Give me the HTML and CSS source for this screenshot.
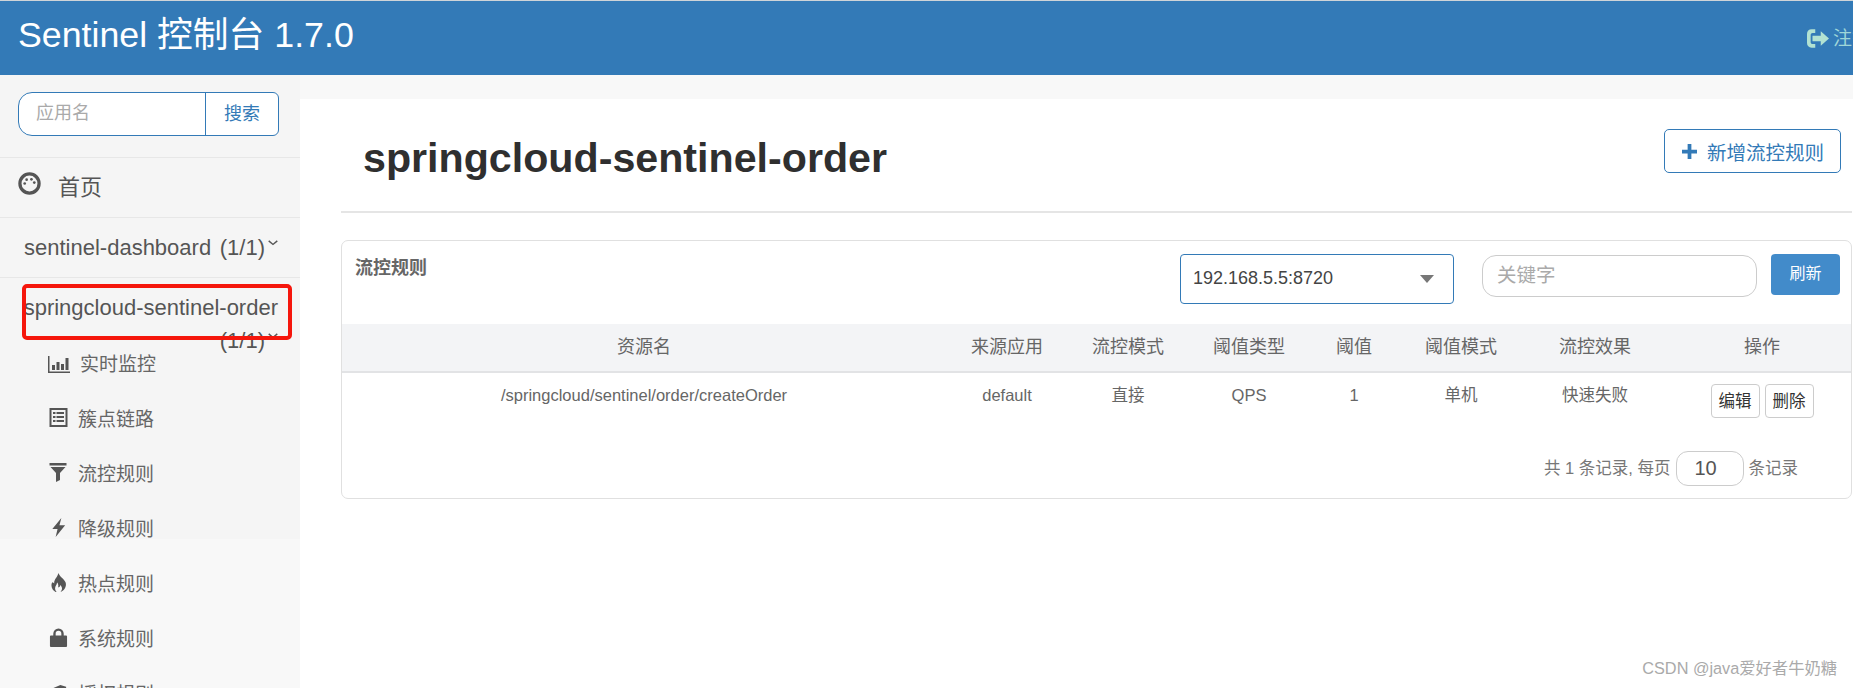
FILE: index.html
```html
<!DOCTYPE html>
<html lang="zh-CN">
<head>
<meta charset="utf-8">
<title>Sentinel 控制台</title>
<link rel="stylesheet" href="styles.css">
</head>
<body>
<header class="topbar">
  <div class="brand">Sentinel 控制台 1.7.0</div>
  <div class="logout">
    <svg class="logout-icon" viewBox="0 0 24 20"><path d="M9 0H5C2 0 0 2 0 5v10c0 3 2 5 5 5h4v-4H6c-1 0-2-1-2-2V6c0-1 1-2 2-2h3z"/><path d="M6 7h9V2l9 8-9 8v-5H6z"/></svg>
    <span class="logout-text">注销</span>
  </div>
</header>
<div class="layout">
  <aside class="sidebar">
    <div class="sidebar-top">
      <div class="search-wrap">
        <div class="search">
          <span class="search-input">应用名</span>
          <span class="search-btn">搜索</span>
        </div>
      </div>
      <div class="nav-row nav-home">
        <svg class="home-icon" viewBox="0 0 24 24"><circle cx="12" cy="12" r="10" fill="none" stroke="currentColor" stroke-width="3.4"/><circle cx="7" cy="12" r="1.4" fill="currentColor"/><circle cx="9" cy="8" r="1.4" fill="currentColor"/><circle cx="14" cy="7.6" r="1.4" fill="currentColor"/><circle cx="17" cy="11" r="1.4" fill="currentColor"/></svg>
        <span>首页</span>
      </div>
      <div class="nav-row nav-app">
        <span class="app-name">sentinel-dashboard</span>
        <span class="app-count">(1/1)</span>
        <svg class="chev" viewBox="0 0 14 8"><path d="M1 1l6 5 6-5" fill="none" stroke="currentColor" stroke-width="2"/></svg>
      </div>
      <div class="nav-row nav-app nav-open">
        <span class="app-name">springcloud-sentinel-order</span>
        <span class="app-count">(1/1)</span>
        <svg class="chev" viewBox="0 0 14 8"><path d="M1 1l6 5 6-5" fill="none" stroke="currentColor" stroke-width="2"/></svg>
        <div class="annotation"></div>
      </div>
      <ul class="sub">
        <li class="sub-item sub-first"><svg class="sub-icon" viewBox="0 0 22 17" preserveAspectRatio="none"><path d="M0 0h1.500v15.500H22V17H0z"/><path d="M4 9h3v5H4zM8.500 6h3v8h-3zM13 8h3v6h-3zM17.500 2h3v12h-3z"/></svg><span>实时监控</span></li>
        <li class="sub-item"><svg class="sub-icon" viewBox="0 0 18 19"><path fill-rule="evenodd" d="M0 0h18v19H0zM2 2v15h14V2z"/><path d="M3.500 4H6v2H3.500zM7 4h7.500v2H7zM3.500 8H6v2H3.500zM7 8h7.500v2H7zM3.500 12H6v2H3.500zM7 12h7.500v2H7z"/></svg><span>簇点链路</span></li>
        <li class="sub-item"><svg class="sub-icon" viewBox="0 0 18 19"><path d="M0 0h17v2.500H0zM1 4h15l-5.500 6v7L6.500 19v-9z"/></svg><span>流控规则</span></li>
        <li class="sub-item"><svg class="sub-icon" viewBox="0 0 18 20"><path d="M12 0L2.500 11.500h5.500L6 20l10-12.500h-6z"/></svg><span>降级规则</span></li>
        <li class="sub-item"><svg class="sub-icon" viewBox="0 0 18 20"><path d="M9 0c1 4 6 6 7.500 10 1.200 4-1 8.500-5.500 10 2-2 2.500-4.500 0-7.500-.5 2-1.500 2.500-2.500 2.500.8-2 0-4-1-5-.3 3-2.500 4-2 7 .2 1.500 1 2.500 2 3.500-4.500-1-7-6-5.500-10C3 9 3.500 10.500 4.500 11 4 7 7.500 5 9 0z"/></svg><span>热点规则</span></li>
        <li class="sub-item"><svg class="sub-icon" viewBox="0 0 18 20"><path d="M3.500 8V6a5.500 5.500 0 0 1 11 0v2H17c.6 0 1 .4 1 1v10c0 .6-.4 1-1 1H1c-.6 0-1-.4-1-1V9c0-.6.4-1 1-1zM6 8h6V6a3 3 0 0 0-6 0z"/></svg><span>系统规则</span></li>
        <li class="sub-item"><svg class="sub-icon" viewBox="0 0 18 20"><path d="M2 6l9-4 6 2v4H2z"/></svg><span>授权规则</span></li>
      </ul>
    </div>
  </aside>
  <main class="main">
    <div class="content">
      <div class="page-head">
        <h1 class="page-title">springcloud-sentinel-order</h1>
        <a class="add-btn"><svg class="plus" viewBox="0 0 16 16"><path d="M6 0h4v6h6v4h-6v6H6v-6H0V6h6z"/></svg>新增流控规则</a>
      </div>
      <section class="card">
        <div class="card-head">
          <div class="card-title">流控规则</div>
          <div class="select"><span>192.168.5.5:8720</span><i class="caret"></i></div>
          <div class="keyword">关键字</div>
          <a class="refresh">刷新</a>
        </div>
        <div class="grid grid-head">
          <div>资源名</div><div>来源应用</div><div>流控模式</div><div>阈值类型</div><div>阈值</div><div>阈值模式</div><div>流控效果</div><div class="head-ops">操作</div>
        </div>
        <div class="grid grid-row">
          <div>/springcloud/sentinel/order/createOrder</div><div>default</div><div>直接</div><div>QPS</div><div>1</div><div>单机</div><div>快速失败</div>
          <div class="ops"><a class="op">编辑</a><a class="op">删除</a></div>
        </div>
        <div class="pager">
          <span class="pager-text">共 1 条记录, 每页</span><span class="page-size">10</span><span class="pager-text">条记录</span>
        </div>
      </section>
    </div>
  </main>
</div>
<div class="watermark">CSDN @java爱好者牛奶糖</div>
</body>
</html>
```
FILE: styles.css
```css
* { box-sizing: border-box; }
html, body { margin: 0; height: 688px; overflow: hidden; }
body {
  position: relative;
  background: #fff;
  color: #676a6c;
  font-family: "Liberation Sans", "Noto Sans CJK SC", sans-serif;
  font-size: 18px;
}
.topbar {
  height: 75px;
  border-top: 1px solid #cfd4d8;
  background: #337ab7;
  display: flex;
  justify-content: space-between;
  padding-left: 18px;
  color: #fff;
}
.brand { font-size: 35.75px; line-height: 68px; }
.logout {
  width: 46px;
  flex: none;
  display: flex;
  gap: 4px;
  padding-top: 28px;
  overflow: hidden;
  color: #9fd6d8;
}
.logout-icon { width: 22px; height: 19px; flex: none; fill: #b2e2d2; }
.logout-text { font-size: 19px; line-height: 20px; white-space: nowrap; }

.layout { display: flex; height: 613px; overflow: hidden; }
.sidebar { width: 300px; flex: none; background: #f8f8f8; overflow: hidden; }
.sidebar-top { height: 464px; background: #f5f5f5; }
.search-wrap { padding: 17px 21px 21px 18px; border-bottom: 1px solid #e7e7e7; height: 83px; }
.search {
  display: flex;
  height: 44px;
  background: #fff;
  border: 1px solid #337ab7;
  border-radius: 14px 6px 6px 14px;
  line-height: 40px;
}
.search-input { width: 187px; padding-left: 17px; color: #aaa; border-right: 1px solid #337ab7; }
.search-btn { flex: 1; text-align: center; color: #337ab7; line-height: 42px; }
.nav-row { height: 60px; border-bottom: 1px solid #e7e7e7; color: #555; }
.nav-home { display: flex; padding-left: 18px; padding-top: 14px; font-size: 22px; line-height: 31px; gap: 17px; }
.home-icon { width: 23px; height: 23px; flex: none; }
.nav-app {
  position: relative;
  display: flex;
  flex-wrap: wrap;
  justify-content: flex-end;
  align-content: flex-start;
  padding: 13px 22px 0 24px;
  font-size: 22px;
  line-height: 33px;
}
.app-name { margin-right: auto; white-space: nowrap; }
.nav-open { height: 59px; border-bottom: 0; }
.chev { width: 10px; height: 6px; margin: 9px 0 0 3px; flex: none; }
.annotation {
  position: absolute;
  left: 22px;
  top: 6px;
  width: 270px;
  height: 56px;
  border: 4px solid #f5160c;
  border-radius: 5px;
}
.sub { list-style: none; margin: 0; padding: 0; }
.sub-item { height: 55px; display: flex; align-items: center; padding-left: 49px; gap: 10px; color: #666; line-height: 55px; font-size: 19px; }
.sub-first { padding-left: 48px; gap: 10px; }
.sub-icon { width: 19px; height: 19px; flex: none; fill: #555; margin-bottom: 4px; }
.sub-first .sub-icon { width: 22px; height: 17px; margin-bottom: 0; }

.main { flex: 1; min-width: 0; background: #f8f8f8; padding-top: 24px; }
.content { height: 100%; background: #fff; padding: 0 1px 0 41px; }
.page-head {
  height: 114px;
  border-bottom: 2px solid #e5e5e5;
  display: flex;
  justify-content: space-between;
  padding: 30px 11px 0 22px;
}
.page-title { margin: 0; font-size: 41.2px; line-height: 58px; color: #2f2f2f; font-weight: 700; }
.add-btn {
  width: 177px;
  height: 44px;
  border: 1px solid #337ab7;
  border-radius: 5px;
  color: #337ab7;
  display: flex;
  align-items: center;
  padding-left: 17px;
  gap: 10px;
  font-size: 19.5px;
}
.plus { width: 15px; height: 15px; fill: #337ab7; flex: none; }
.card { margin-top: 27px; height: 259px; border: 1px solid #e0e0e0; border-radius: 7px; }
.card-head { height: 83px; display: flex; align-items: flex-start; padding: 13px 12px 0 13px; }
.card-title { font-size: 18px; font-weight: 700; line-height: 22px; margin-top: 3px; color: #666; width: 825px; flex: none; }
.select {
  width: 274px;
  height: 50px;
  flex: none;
  border: 1px solid #337ab7;
  border-radius: 4px;
  display: flex;
  align-items: center;
  justify-content: space-between;
  padding: 0 19px 2px 12px;
  color: #444;
  font-size: 18px;
}
.caret { width: 0; height: 0; border: 7px solid transparent; border-top: 8px solid #777; border-bottom: 0; margin-top: 2px; }
.keyword {
  width: 275px;
  height: 42px;
  flex: none;
  margin: 1px 14px 0 28px;
  border: 1px solid #ccc;
  border-radius: 14px;
  padding-left: 14px;
  line-height: 39px;
  color: #aaa;
  font-size: 19.5px;
}
.refresh {
  width: 69px;
  height: 41px;
  flex: none;
  border-radius: 4px;
  background: #428bca;
  color: #fff;
  text-align: center;
  line-height: 40px;
  font-size: 16px;
}
.grid { display: grid; grid-template-columns: 604px 122px 120px 122px 88px 126px 142px 186px; text-align: center; }
.grid-head { height: 49px; line-height: 46px; background: #f3f4f6; border-bottom: 2px solid #e2e3e5; font-size: 18px; color: #666; }
.head-ops { padding-left: 6px; }
.grid-row { height: 72px; padding-top: 8px; font-size: 16.5px; line-height: 28px; color: #666; }
.ops { display: flex; justify-content: center; gap: 5px; padding-top: 3px; padding-left: 6px; }
.op {
  width: 49px;
  height: 34px;
  border: 1px solid #ccc;
  border-radius: 4px;
  color: #333;
  line-height: 32px;
  font-size: 16.5px;
}
.pager { display: flex; align-items: center; justify-content: flex-end; gap: 5px; padding-right: 53px; height: 35px; margin-top: 6px; font-size: 16.5px; color: #777; }
.pager-text { padding-bottom: 3px; }
.page-size {
  width: 68px;
  height: 35px;
  border: 1px solid #ccc;
  border-radius: 12px;
  padding-left: 18px;
  font-size: 20px;
  line-height: 33px;
  color: #555;
}
.watermark { position: absolute; right: 16px; bottom: 8px; font-size: 16.3px; line-height: 24px; color: #aaa; }
```
